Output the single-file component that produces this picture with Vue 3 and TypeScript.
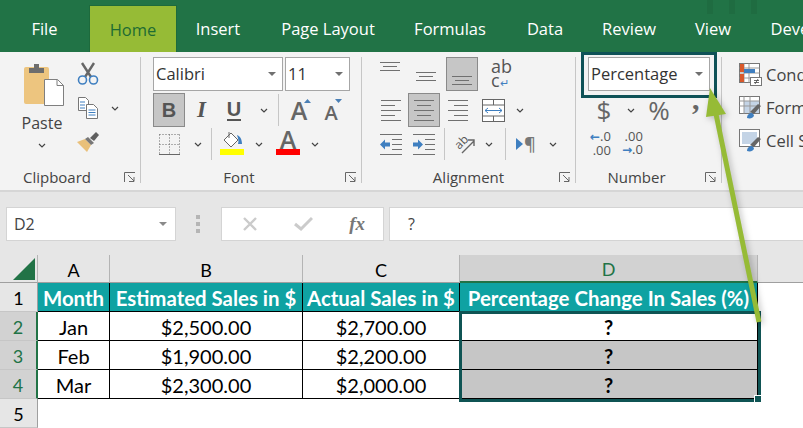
<script setup lang="ts">
const tabs = [
  { label: 'File', width: 89 },
  { label: 'Home', width: 88, active: true },
  { label: 'Insert', width: 82 },
  { label: 'Page Layout', width: 138 },
  { label: 'Formulas', width: 106 },
  { label: 'Data', width: 84 },
  { label: 'Review', width: 84 },
  { label: 'View', width: 84 },
  { label: 'Developer', width: 110 },
]

const columns = ['A', 'B', 'C', 'D']
const header = ['Month', 'Estimated Sales in $', 'Actual Sales in $', 'Percentage Change In Sales (%)']
const rows = [
  ['Jan', '$2,500.00', '$2,700.00', '?'],
  ['Feb', '$1,900.00', '$2,200.00', '?'],
  ['Mar', '$2,300.00', '$2,000.00', '?'],
]
</script>

<template>
  <div class="sheet-app">
    <!-- tab strip -->
    <div class="tabs">
      <div
        v-for="tab in tabs"
        :key="tab.label"
        class="tab"
        :class="{ active: tab.active }"
        :style="{ width: tab.width + 'px' }"
      >{{ tab.label }}</div>
      <div class="tab-deco"><i></i><i></i><i></i></div>
    </div>

    <!-- ribbon -->
    <div class="ribbon">
      <section class="group clipboard">
        <div class="body clip-body">
          <div class="paste">
            <svg width="44" height="46" viewBox="0 0 44 46">
              <rect x="1" y="6" width="25" height="37" rx="2" fill="#edc57f" />
              <path d="M6 12V7h5V3h5v4h5v5z" fill="#6d6d6d" />
              <path d="M21.500 18.500h13l6 6v20h-19z" fill="#fff" stroke="#7f7f7f" />
              <path d="M34 18.500v6h6.500" fill="none" stroke="#7f7f7f" />
            </svg>
            <span class="paste-label">Paste</span>
            <svg class="chev paste-chev" width="8" height="5" viewBox="0 0 8 5"><path d="M1 1l3 3 3-3" /></svg>
          </div>
          <div class="clip-tools">
            <svg width="22" height="23" viewBox="0 0 22 23">
              <path d="M5 1l9 14M17 1L8 15" stroke="#666" stroke-width="2.400" fill="none" />
              <circle cx="5.500" cy="18" r="4" fill="none" stroke="#3f7fc0" stroke-width="1.600" />
              <circle cx="16.500" cy="18" r="4" fill="none" stroke="#3f7fc0" stroke-width="1.600" />
            </svg>
            <div class="copy-row">
              <svg width="22" height="22" viewBox="0 0 22 22">
                <path d="M1.500.5h7l3 3v10h-10z" fill="#fff" stroke="#777" />
                <path d="M9.500 7.500h7l4 4v10h-11z" fill="#fff" stroke="#777" />
                <path d="M3 5h5M3 8h5M3 11h5M11.500 13h7M11.500 15.500h7M11.500 18h7" stroke="#3f7fc0" />
              </svg>
              <svg class="chev" width="8" height="5" viewBox="0 0 8 5"><path d="M1 1l3 3 3-3" /></svg>
            </div>
            <svg width="24" height="21" viewBox="0 0 24 21">
              <path d="M0 11l8-3 6 6-4 7z" fill="#e9c07a" />
              <path d="M8 8l3-2 6 6-3 2z" fill="#777" />
              <path d="M13 7l6-6 3 3-5 6z" fill="#5f5f5f" />
            </svg>
          </div>
        </div>
        <div class="foot">Clipboard
          <svg class="launcher" width="12" height="11" viewBox="0 0 12 11"><path d="M.5 10V.5H11M4 3l6 6M10 5v4.500H5" /></svg>
        </div>
      </section>
      <div class="sep"></div>

      <section class="group font">
        <div class="body">
          <div class="row top">
            <div class="combo name">Calibri<span class="caret"></span></div>
            <div class="combo size">11<span class="caret"></span></div>
          </div>
          <div class="row">
            <div class="tool w32 on"><b class="glyph bold">B</b></div>
            <div class="tool w33"><i class="glyph ital">I</i></div>
            <div class="tool w32"><span class="glyph under">U</span></div>
            <div class="tool w28"><svg class="chev" width="8" height="5" viewBox="0 0 8 5"><path d="M1 1l3 3 3-3" /></svg></div>
            <div class="vsep"></div>
            <div class="tool w40">
              <span class="grow big">A</span>
              <svg class="tri" width="7" height="4" viewBox="0 0 7 4"><path d="M0 4l3.500-4L7 4z" fill="#4a7fb5" /></svg>
            </div>
            <div class="tool w24">
              <span class="grow small">A</span>
              <svg class="tri" width="7" height="4" viewBox="0 0 7 4"><path d="M0 0l3.500 4L7 0z" fill="#4a7fb5" /></svg>
            </div>
          </div>
          <div class="row">
            <div class="tool w32">
              <svg width="21" height="21" viewBox="0 0 21 21">
                <path d="M.5.5h20M.5 10.500h20M.5.5v20M10.500.5v20M20.500.5v20" stroke="#666" stroke-dasharray="1 2" fill="none" />
                <path d="M0 20.500h21" stroke="#666" />
              </svg>
            </div>
            <div class="tool w26"><svg class="chev" width="8" height="5" viewBox="0 0 8 5"><path d="M1 1l3 3 3-3" /></svg></div>
            <div class="vsep"></div>
            <div class="tool w40">
              <svg class="fill-icon" width="24" height="24" viewBox="0 0 24 24">
                <path d="M4 9l7-7 7 7-7 7z" fill="#fff" stroke="#666" />
                <path d="M9 1v6" stroke="#666" />
                <path d="M17 4c3 1 5 4 5 9h-4c1-3 0-6-1-9z" fill="#3f7fc0" />
                <rect y="18" width="24" height="6" fill="#ffff00" />
              </svg>
            </div>
            <div class="tool w14"><svg class="chev" width="8" height="5" viewBox="0 0 8 5"><path d="M1 1l3 3 3-3" /></svg></div>
            <div class="tool w44 color-a">
              <span class="letter">A</span>
              <span class="red-bar"></span>
            </div>
            <div class="tool w10"><svg class="chev" width="8" height="5" viewBox="0 0 8 5"><path d="M1 1l3 3 3-3" /></svg></div>
          </div>
        </div>
        <div class="foot">Font
          <svg class="launcher" width="12" height="11" viewBox="0 0 12 11"><path d="M.5 10V.5H11M4 3l6 6M10 5v4.500H5" /></svg>
        </div>
      </section>
      <div class="sep"></div>

      <section class="group align">
        <div class="body">
          <div class="row top">
            <div class="tool w32 start">
              <svg width="20" height="9" viewBox="0 0 20 9"><path d="M0 .5h20M3 4.500h14M0 8.500h20" stroke="#707070" /></svg>
            </div>
            <div class="tool w36">
              <svg class="shift-mid" width="20" height="9" viewBox="0 0 20 9"><path d="M0 .5h20M3 4.500h14M0 8.500h20" stroke="#707070" /></svg>
            </div>
            <div class="tool w32 on end">
              <svg width="20" height="9" viewBox="0 0 20 9"><path d="M0 .5h20M3 4.500h14M0 8.500h20" stroke="#707070" /></svg>
            </div>
            <div class="tool w40 wrap-text"><span>ab</span><span>c<em>↵</em></span></div>
          </div>
          <div class="row">
            <div class="tool w34">
              <svg width="20" height="21" viewBox="0 0 20 21"><path d="M0 .5h20M0 5.500h14M0 10.500h20M0 15.500h14M0 20.500h20" stroke="#707070" /></svg>
            </div>
            <div class="tool w32 on">
              <svg width="20" height="21" viewBox="0 0 20 21"><path d="M0 .5h20M3 5.500h14M0 10.500h20M3 15.500h14M0 20.500h20" stroke="#707070" /></svg>
            </div>
            <div class="tool w36">
              <svg width="20" height="21" viewBox="0 0 20 21"><path d="M0 .5h20M6 5.500h14M0 10.500h20M6 15.500h14M0 20.500h20" stroke="#707070" /></svg>
            </div>
            <div class="tool w34">
              <svg width="23" height="23" viewBox="0 0 23 23">
                <rect x=".5" y=".5" width="22" height="22" fill="#fff" stroke="#666" />
                <path d="M.5 6h22M.5 17h22M11.500.5V6M11.500 17v6" stroke="#666" />
                <path d="M3 11.500h17M6 9l-3 2.500L6 14M17 9l3 2.500-3 2.500" stroke="#3f7fc0" fill="none" />
              </svg>
            </div>
            <div class="tool w20"><svg class="chev" width="8" height="5" viewBox="0 0 8 5"><path d="M1 1l3 3 3-3" /></svg></div>
          </div>
          <div class="row">
            <div class="tool w34">
              <svg width="22" height="21" viewBox="0 0 22 21">
                <path d="M0 .5h22M12 5.500h10M12 10.500h10M12 15.500h10M0 20.500h22" stroke="#707070" />
                <path d="M0 10.500l5-5v3h5v4H5v3z" fill="#3f7fc0" />
              </svg>
            </div>
            <div class="tool w32">
              <svg width="22" height="21" viewBox="0 0 22 21">
                <path d="M0 .5h22M12 5.500h10M12 10.500h10M12 15.500h10M0 20.500h22" stroke="#707070" />
                <path d="M10 10.500l-5-5v3H0v4h5v3z" fill="#3f7fc0" />
              </svg>
            </div>
            <div class="vsep ml4"></div>
            <div class="tool w40">
              <svg width="22" height="22" viewBox="0 0 22 22">
                <text class="orient" x="1" y="13" transform="rotate(-45 8 10)">ab</text>
                <path d="M8 20L20 8M14 7h6v6" stroke="#666" stroke-width="1.400" fill="none" />
              </svg>
            </div>
            <div class="tool w8"><svg class="chev" width="8" height="5" viewBox="0 0 8 5"><path d="M1 1l3 3 3-3" /></svg></div>
            <div class="w12"></div>
            <div class="vsep"></div>
            <div class="tool w40 pilcrow">
              <svg width="7" height="12" viewBox="0 0 7 12"><path d="M0 0l7 6-7 6z" fill="#3f7fc0" /></svg>
              <span>¶</span>
            </div>
            <div class="tool w14"><svg class="chev" width="8" height="5" viewBox="0 0 8 5"><path d="M1 1l3 3 3-3" /></svg></div>
          </div>
        </div>
        <div class="foot">Alignment
          <svg class="launcher" width="12" height="11" viewBox="0 0 12 11"><path d="M.5 10V.5H11M4 3l6 6M10 5v4.500H5" /></svg>
        </div>
      </section>
      <div class="sep"></div>

      <section class="group number">
        <div class="frame"></div>
        <div class="body">
          <div class="row top">
            <div class="combo format">Percentage<span class="caret"></span></div>
          </div>
          <div class="row money">
            <span class="dollar">$</span>
            <svg class="chev" width="8" height="5" viewBox="0 0 8 5"><path d="M1 1l3 3 3-3" /></svg>
            <span class="percent">%</span>
            <span class="comma">,</span>
          </div>
          <div class="row decimals">
            <div class="dec">
              <span><em>←</em>.0</span>
              <span>.00</span>
            </div>
            <div class="dec">
              <span>.00</span>
              <span><em>→</em>.0</span>
            </div>
          </div>
        </div>
        <div class="foot">Number
          <svg class="launcher" width="12" height="11" viewBox="0 0 12 11"><path d="M.5 10V.5H11M4 3l6 6M10 5v4.500H5" /></svg>
        </div>
      </section>
      <div class="sep"></div>

      <section class="group styles">
        <div class="style-row">
          <svg width="23" height="23" viewBox="0 0 23 23">
            <rect x=".5" y=".5" width="20" height="19" fill="#fff" stroke="#777" />
            <path d="M.5 5h20M.5 10h20M.5 15h20M5 .5v19M10 .5v19" stroke="#999" />
            <rect x="1" y="1" width="4" height="8" fill="#d9592b" />
            <rect x="5" y="6" width="11" height="4" fill="#3f7fc0" />
            <rect x="1" y="11" width="4" height="8" fill="#d9592b" />
            <rect x="11.500" y="14.500" width="11" height="8" fill="#fff" stroke="#777" />
            <path d="M15 17.500h5M15 19.500h5M16 21l3-5" stroke="#444" stroke-width=".8" />
          </svg>
          <span>Conditional Formatting</span>
        </div>
        <div class="style-row">
          <svg width="23" height="23" viewBox="0 0 23 23">
            <rect x=".5" y=".5" width="20" height="17" fill="#fff" stroke="#777" />
            <rect x="5" y="5" width="15" height="12" fill="#c4d4e6" />
            <path d="M.5 5h20M.5 10h20M5 .5v17M11 .5v17" stroke="#999" />
            <path d="M11 16l8-8 3 2-7 8z" fill="#666" />
            <path d="M8 22c0-3 2-5 5-5l2 2c0 3-4 4-7 3z" fill="#3f7fc0" />
          </svg>
          <span>Format as Table</span>
        </div>
        <div class="style-row">
          <svg width="23" height="23" viewBox="0 0 23 23">
            <rect x=".5" y=".5" width="20" height="17" fill="#fff" stroke="#777" />
            <rect x="3" y="3" width="15" height="12" fill="#c4d4e6" />
            <path d="M11 16l8-8 3 2-7 8z" fill="#666" />
            <path d="M8 22c0-3 2-5 5-5l2 2c0 3-4 4-7 3z" fill="#3f7fc0" />
          </svg>
          <span>Cell Styles</span>
        </div>
      </section>
    </div>

    <!-- formula bar -->
    <div class="formula-bar">
      <div class="name-box">D2<span class="caret"></span></div>
      <div class="dots"><i></i><i></i><i></i></div>
      <div class="fx-box">
        <svg width="14" height="14" viewBox="0 0 14 14"><path d="M1 1l12 12M13 1L1 13" stroke="#cbcbcb" stroke-width="2.400" /></svg>
        <svg width="19" height="15" viewBox="0 0 19 15"><path d="M1 8l6 5L18 2" stroke="#cbcbcb" stroke-width="3" fill="none" /></svg>
        <span class="fx">fx</span>
      </div>
      <div class="formula-input">?</div>
    </div>

    <!-- grid -->
    <div class="grid">
      <div class="col-head corner">
        <svg width="22" height="22" viewBox="0 0 22 22"><path d="M22 0v22H0z" fill="#217346" /></svg>
      </div>
      <div
        v-for="col in columns"
        :key="col"
        class="col-head"
        :class="{ picked: col === 'D' }"
      >{{ col }}</div>
      <div class="col-head blank"></div>

      <div class="row-head">1</div>
      <div v-for="text in header" :key="text" class="cell title">{{ text }}</div>
      <div class="void"></div>

      <template v-for="(row, r) in rows" :key="r">
        <div class="row-head picked">{{ r + 2 }}</div>
        <div
          v-for="(value, c) in row"
          :key="c"
          class="cell"
          :class="{ ask: c === 3, shaded: c === 3 && r > 0 }"
        >{{ value }}</div>
        <div class="void"></div>
      </template>

      <div class="row-head">5</div>
      <div class="void wide"></div>

      <div class="selection"><span class="handle"></span></div>
    </div>

    <!-- annotation arrow -->
    <svg class="arrow" width="803" height="428" viewBox="0 0 803 428">
      <path d="M759 322L716 114" stroke="#96bb36" stroke-width="5" fill="none" />
      <path d="M710 88l16 26-20 3z" fill="#96bb36" />
    </svg>
  </div>
</template>

<style scoped>
.sheet-app {
  position: relative;
  width: 803px;
  height: 428px;
  overflow: hidden;
  background: #e6e6e6;
  font-family: "Open Sans", "Liberation Sans", sans-serif;
  color: #444;
}

/* tabs */
.tabs {
  position: relative;
  display: flex;
  height: 52px;
  background: #217346;
  white-space: nowrap;
}
.tab {
  flex: none;
  padding-top: 17px;
  text-align: center;
  font-size: 16.500px;
  line-height: 24px;
  color: #fff;
}
.tab.active {
  margin-top: 5px;
  padding-top: 12px;
  box-sizing: border-box;
  background: #96bb36;
  border: 1px solid #1d6a3c;
  border-bottom: 0;
  color: #1e6b33;
}
.tab-deco {
  position: absolute;
  left: 707px;
  top: 0;
  display: flex;
  gap: 16px;
}
.tab-deco i {
  width: 6px;
  height: 14px;
  background: #1f6c41;
}

/* ribbon */
.ribbon {
  display: flex;
  height: 138px;
  background: #f3f3f3;
  border-bottom: 2px solid #d6d6d6;
  box-sizing: content-box;
  font-size: 15px;
}
.group {
  position: relative;
  display: flex;
  flex-direction: column;
  flex: none;
}
.clipboard { width: 140px; }
.font { width: 220px; padding-left: 12px; box-sizing: border-box; }
.align { width: 213px; padding-left: 12px; box-sizing: border-box; }
.number { width: 145px; padding-left: 12px; box-sizing: border-box; }
.styles { flex: 1; padding: 6px 0 0 17px; }
.sep {
  flex: none;
  width: 1px;
  height: 126px;
  margin-top: 5px;
  background: #c6c6c6;
}
.body {
  flex: 1;
  padding-top: 5px;
}
.foot {
  position: relative;
  height: 28px;
  box-sizing: border-box;
  padding-top: 4px;
  margin-left: -12px;
  text-align: center;
  font-size: 15px;
  line-height: 22px;
  color: #444;
}
.clipboard .foot { margin-left: 0; padding-right: 26px; }
.font .foot { padding-right: 24px; }
.number .foot { padding-right: 24px; }
.launcher {
  position: absolute;
  right: 4px;
  top: 10px;
  fill: none;
  stroke: #666;
}
.row {
  display: flex;
  align-items: center;
  height: 34px;
}
.row.top {
  gap: 2px;
  margin-bottom: 2px;
}
.tool {
  position: relative;
  flex: none;
  display: flex;
  align-items: center;
  justify-content: center;
  height: 34px;
  box-sizing: border-box;
}
.tool.on {
  background: #c6c6c6;
  border: 1px solid #8a8a8a;
}
.tool.start { align-items: flex-start; padding-top: 5px; }
.tool.end { align-items: flex-end; padding-bottom: 5px; }
.shift-mid { margin-top: 5px; }
.w8 { width: 8px; flex: none; }
.w10 { width: 10px; }
.w12 { width: 12px; flex: none; }
.w14 { width: 14px; }
.w20 { width: 20px; }
.w24 { width: 24px; }
.w26 { width: 26px; }
.w28 { width: 28px; }
.w32 { width: 32px; }
.w33 { width: 33px; }
.w34 { width: 34px; }
.w36 { width: 36px; }
.w40 { width: 40px; }
.w44 { width: 44px; }
.vsep {
  flex: none;
  width: 1px;
  height: 32px;
  background: #c6c6c6;
}
.ml4 { margin-left: 4px; }
.chev {
  fill: none;
  stroke: #444;
  stroke-width: 1.200;
}
.caret {
  position: absolute;
  right: 6px;
  top: 14px;
  border-left: 4px solid transparent;
  border-right: 4px solid transparent;
  border-top: 4px solid #707070;
}

/* clipboard */
.clip-body {
  display: flex;
  padding-top: 9px;
}
.paste {
  display: flex;
  flex-direction: column;
  align-items: center;
  width: 44px;
  margin-left: 23px;
}
.paste-label {
  margin-top: 5px;
  margin-left: -6px;
  font-size: 16px;
  line-height: 22px;
}
.paste-chev { margin-top: 9px; margin-left: -6px; }
.clip-tools {
  display: flex;
  flex-direction: column;
  align-items: flex-start;
  gap: 12px;
  margin-left: 10px;
  padding-top: 1px;
}
.copy-row {
  display: flex;
  align-items: center;
  gap: 12px;
}

/* font */
.combo {
  position: relative;
  flex: none;
  height: 34px;
  box-sizing: border-box;
  padding-left: 2px;
  background: #fff;
  border: 1px solid #a6a6a6;
  font-size: 16.500px;
  line-height: 32px;
  color: #333;
}
.name { width: 130px; }
.size { width: 65px; }
.format { width: 122px; }
.glyph {
  font-family: "Liberation Sans", sans-serif;
  font-size: 20px;
  color: #555;
}
.ital { font-family: "Liberation Serif", serif; font-weight: bold; font-size: 23px; }
.under { border-bottom: 2px solid #555; line-height: 20px; font-weight: bold; }
.grow {
  font-family: "Open Sans", sans-serif;
  font-weight: 600;
  color: #666;
}
.big { font-size: 25px; }
.small { font-size: 20px; margin-top: 4px; }
.tri {
  position: absolute;
  top: 6px;
  right: 8px;
}
.w24 .tri { right: 1px; }
.fill-icon { margin-top: -3px; }
.letter {
  font-size: 25px;
  font-weight: 600;
  line-height: 26px;
  color: #666;
  margin-top: -10px;
}
.red-bar {
  position: absolute;
  left: 10px;
  bottom: 6px;
  width: 24px;
  height: 6px;
  background: #ff0000;
}

/* alignment */
.wrap-text {
  flex-direction: column;
  align-items: flex-start;
  padding-left: 11px;
  font-size: 18px;
  line-height: 14px;
  color: #555;
}
.wrap-text em {
  font-style: normal;
  font-size: 11px;
  color: #3f7fc0;
}
.orient {
  font-size: 12px;
  fill: #555;
}
.pilcrow { gap: 1px; }
.pilcrow span {
  font-size: 18px;
  font-weight: 600;
  color: #777;
}

/* number */
.frame {
  position: absolute;
  left: 5px;
  top: 0;
  width: 136px;
  height: 46px;
  box-sizing: border-box;
  border: 3px solid #0f5257;
}
.money {
  height: 34px;
  margin-top: 1px;
  color: #666;
}
.dollar {
  width: 32px;
  text-align: center;
  font-size: 26px;
}
.money .chev { margin-left: 7px; }
.percent {
  width: 30px;
  margin-left: 9px;
  text-align: center;
  font-size: 26px;
}
.comma {
  margin-left: 18px;
  margin-top: -22px;
  font-family: "Liberation Serif", serif;
  font-weight: bold;
  font-size: 30px;
}
.decimals {
  gap: 11px;
  margin-top: -1px;
  padding-left: 2px;
}
.dec {
  display: flex;
  flex-direction: column;
  align-items: flex-end;
  font-size: 13px;
  line-height: 13px;
  color: #555;
}
.dec em {
  font-family: "DejaVu Sans", sans-serif;
  font-style: normal;
  font-weight: bold;
  font-size: 12px;
  color: #3f7fc0;
}

/* styles */
.style-row {
  display: flex;
  align-items: center;
  gap: 4px;
  height: 33px;
  font-size: 16.500px;
  white-space: nowrap;
}
.style-row svg { flex: none; }

/* formula bar */
.formula-bar {
  display: flex;
  align-items: center;
  height: 63px;
  padding: 0 0 0 6px;
  background: #e6e6e6;
}
.name-box {
  position: relative;
  width: 170px;
  height: 34px;
  box-sizing: border-box;
  padding-left: 7px;
  background: #fff;
  border: 1px solid #d4d4d4;
  font-size: 16px;
  line-height: 32px;
}
.name-box .caret { right: 8px; top: 14px; border-top-color: #8a8a8a; }
.dots {
  display: flex;
  flex-direction: column;
  gap: 3px;
  margin: 0 21px 0 20px;
}
.dots i {
  width: 4px;
  height: 4px;
  background: #b5b5b5;
}
.fx-box {
  display: flex;
  align-items: center;
  justify-content: space-between;
  width: 163px;
  height: 34px;
  box-sizing: border-box;
  padding: 0 18px 0 21px;
  background: #fff;
  border: 1px solid #d4d4d4;
}
.fx {
  font-family: "Liberation Serif", serif;
  font-style: italic;
  font-weight: bold;
  font-size: 19px;
  color: #777;
}
.formula-input {
  flex: 1;
  height: 34px;
  margin-left: 5px;
  box-sizing: border-box;
  padding-left: 18px;
  background: #fff;
  border: 1px solid #d4d4d4;
  border-right: 0;
  font-size: 16px;
  line-height: 32px;
}

/* grid */
.grid {
  position: relative;
  display: grid;
  grid-template-columns: 38px 72px 193px 157px 298px 45px;
  grid-template-rows: 28px 29px 29px 29px 29px 29px;
  background: #fff;
  font-family: Lato, "Liberation Sans", sans-serif;
  font-size: 18px;
  color: #000;
}
.col-head {
  display: flex;
  align-items: center;
  justify-content: center;
  box-sizing: border-box;
  padding-top: 2px;
  background: #e6e6e6;
  border-right: 1px solid #b4b4b4;
  border-bottom: 1px solid #9f9f9f;
}
.col-head.corner {
  justify-content: flex-end;
  padding: 0 2px 0 0;
}
.col-head.blank {
  border-right: 0;
}
.col-head.picked {
  background: #d2d2d2;
  color: #217346;
  border-bottom: 2px solid #217346;
}
.row-head {
  display: flex;
  align-items: center;
  justify-content: center;
  box-sizing: border-box;
  padding-top: 2px;
  background: #e6e6e6;
  border-right: 1px solid #9f9f9f;
  border-bottom: 1px solid #c6c6c6;
}
.row-head.picked {
  background: #d2d2d2;
  color: #217346;
  border-right: 2px solid #217346;
}
.cell {
  display: flex;
  align-items: center;
  justify-content: center;
  box-sizing: border-box;
  padding-top: 2px;
  white-space: nowrap;
  font-size: 20px;
  border-right: 1px solid #000;
  border-bottom: 1px solid #000;
}
.cell.title {
  background: #0fa2a2;
  color: #fff;
  font-size: 20.400px;
  font-weight: bold;
}
.cell.ask { font-weight: bold; }
.cell.shaded { background: #c6c6c6; }
.void { background: #fff; }
.void.wide { grid-column: 2 / 7; }
.selection {
  position: absolute;
  left: 459px;
  top: 56px;
  width: 302px;
  height: 91px;
  box-sizing: border-box;
  border: 3px solid #0f5454;
}
.handle {
  position: absolute;
  right: -3px;
  bottom: -3px;
  width: 6px;
  height: 6px;
  background: #0f5454;
  border-left: 1px solid #fff;
  border-top: 1px solid #fff;
}

.arrow {
  position: absolute;
  left: 0;
  top: 0;
  pointer-events: none;
  filter: drop-shadow(2px 2px 3px rgba(0, 0, 0, 0.25));
}
</style>
